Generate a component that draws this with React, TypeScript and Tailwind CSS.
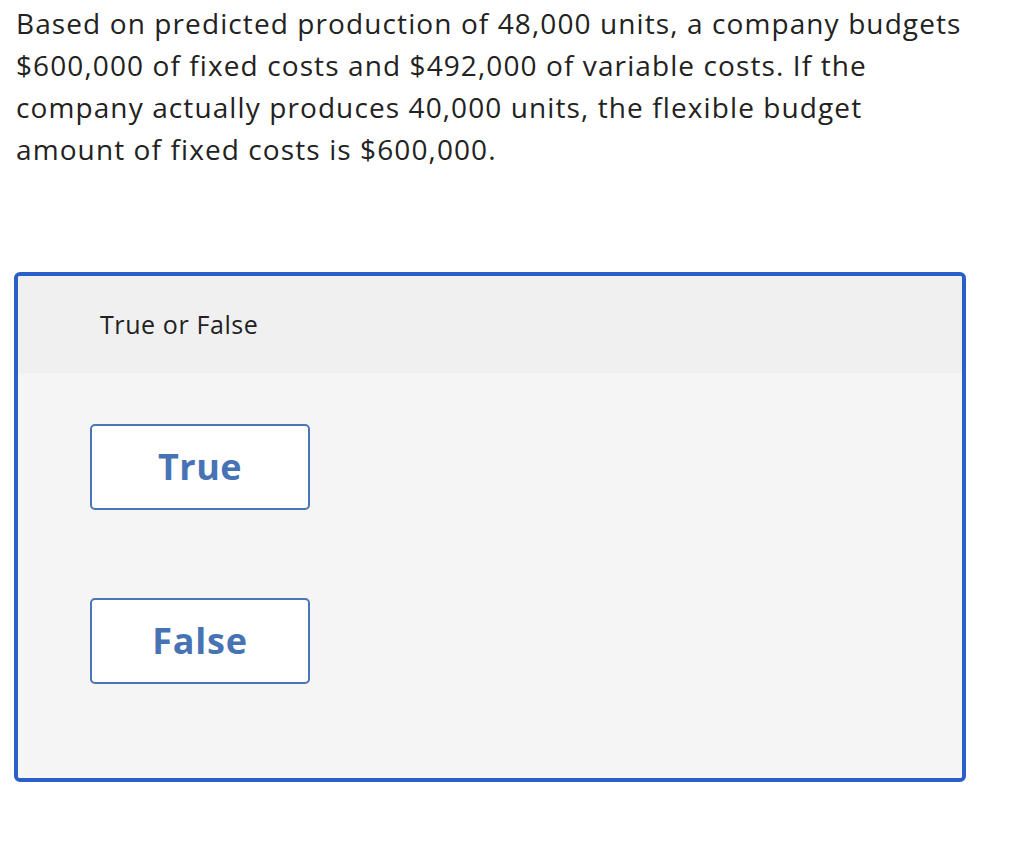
export default function App() {
    return (
        <div className="min-h-screen bg-white pt-[2px]" style={{ fontFamily: '"Open Sans", Lato, sans-serif' }}>
            {/* Question */}
            <p className="pl-[16px] text-[28px] leading-[42px] tracking-[1.1px] text-[#222222]">
                Based on predicted production of 48,000 units, a company budgets
                <br />
                $600,000 of fixed costs and $492,000 of variable costs. If the
                <br />
                company actually produces 40,000 units, the flexible budget
                <br />
                amount of fixed costs is $600,000.
            </p>

            {/* Answer box */}
            <div className="ml-[14px] mt-[102px] w-[952px] overflow-hidden rounded-[6px] border-4 border-[#2a5fc8]">
                <div className="flex h-[97px] items-center bg-[#f0f0f1] pl-[82px]">
                    <span className="text-[25px] tracking-[0.6px] text-[#222222]">True or False</span>
                </div>
                <div className="flex h-[405px] flex-col gap-[88px] bg-[#f5f5f5] pl-[72px] pt-[51px]">
                    <button className="flex h-[86px] w-[220px] items-center justify-center rounded-[5px] border-2 border-[#4a76b5] bg-white text-[36px] font-bold tracking-[0.5px] text-[#4773b4]">
                        True
                    </button>
                    <button className="flex h-[86px] w-[220px] items-center justify-center rounded-[5px] border-2 border-[#4a76b5] bg-white text-[36px] font-bold tracking-[0.8px] text-[#4773b4]">
                        False
                    </button>
                </div>
            </div>
        </div>
    );
}
